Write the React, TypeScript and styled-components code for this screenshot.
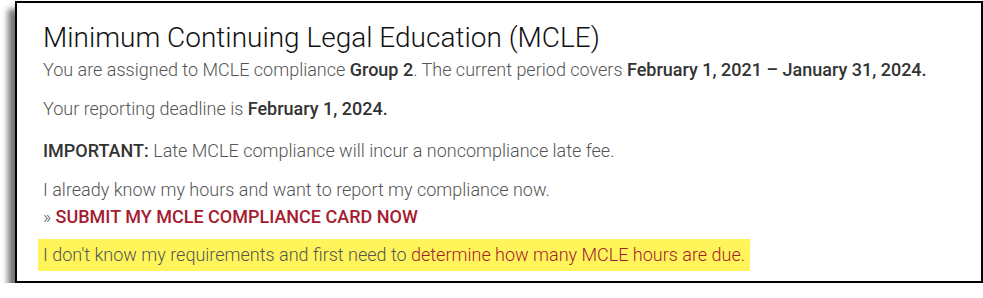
import React from "react";
import styled, { createGlobalStyle } from "styled-components";

const Global = createGlobalStyle`
  html, body { margin: 0; padding: 0; background: #fff; }
  body { font-family: Roboto, "Liberation Sans", Arial, sans-serif; }
`;

const Card = styled.section`
  box-sizing: border-box;
  margin: 1px 0 0 15px;
  width: 968px;
  height: 282px;
  border: 2px solid #000;
  background: #fff;
  box-shadow: -7px 8px 6px rgba(0, 0, 0, 0.55);
  padding: 17px 26px 0 26px;
`;

const Title = styled.h1`
  margin: 0;
  font-size: 28px;
  font-weight: 300;
  line-height: 36px;
  color: #111;
`;

const Para = styled.p<{ $gap?: number }>`
  margin: ${(p) => p.$gap ?? 12}px 0 0;
  font-size: 18px;
  font-weight: 300;
  line-height: 27px;
  color: #555;
`;

const Strong = styled.strong`
  font-weight: 500;
  color: #333;
`;

const Highlight = styled.p`
  display: inline-block;
  margin: 9px 0 0 -5px;
  padding: 3px 5px;
  background: #fff55a;
  font-size: 18px;
  font-weight: 300;
  line-height: 26px;
  color: #555;
`;

const Link = styled.a<{ $bold?: boolean }>`
  color: #a51c30;
  text-decoration: none;
  font-weight: ${(p) => (p.$bold ? 500 : 300)};
  text-transform: ${(p) => (p.$bold ? "uppercase" : "none")};
`;

export default function App() {
  return (
    <>
      <Global />
      <Card>
        <Title>Minimum Continuing Legal Education (MCLE)</Title>
        <Para $gap={0}>
          You are assigned to MCLE compliance <Strong>Group 2</Strong>. The current period covers{" "}
          <Strong>February 1, 2021 – January 31, 2024.</Strong>
        </Para>
        <Para>
          Your reporting deadline is <Strong>February 1, 2024.</Strong>
        </Para>
        <Para $gap={15}>
          <Strong>IMPORTANT:</Strong> Late MCLE compliance will incur a noncompliance late fee.
        </Para>
        <Para>
          I already know my hours and want to report my compliance now.
          <br />» <Link $bold href="#">Submit my MCLE compliance card now</Link>
        </Para>
        <Highlight>
          I don't know my requirements and first need to{" "}
          <Link href="#">determine how many MCLE hours are due.</Link>
        </Highlight>
      </Card>
    </>
  );
}
